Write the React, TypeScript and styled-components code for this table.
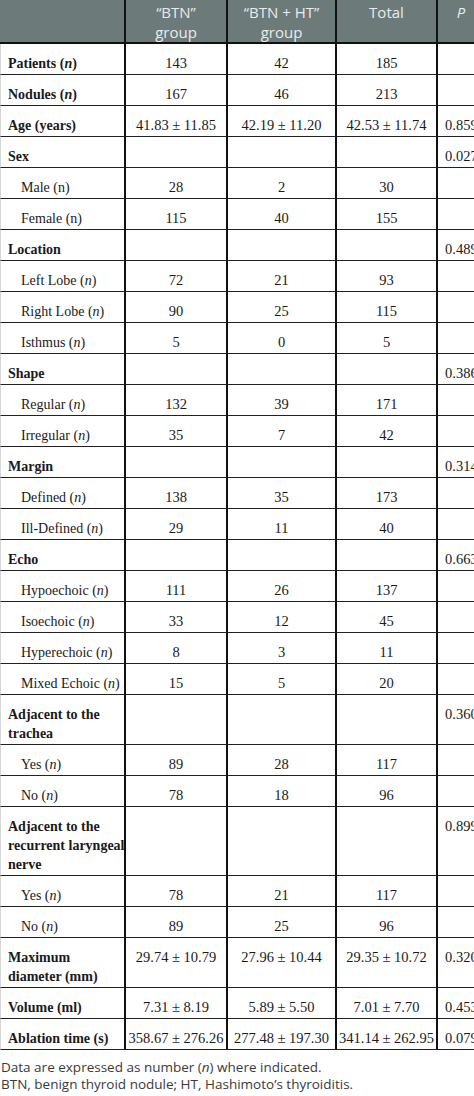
import React from 'react'
import styled, { createGlobalStyle } from 'styled-components'

const GlobalStyle = createGlobalStyle`
  html, body {
    margin: 0;
    padding: 0;
    background: #ffffff;
    overflow-x: hidden;
  }
`

const Page = styled.div`
  width: 474px;
  overflow: hidden;
  background: #fff;
`

const Table = styled.table`
  border-collapse: separate;
  border-spacing: 0;
  table-layout: fixed;
  width: 486px;
`

const HeadCell = styled.th<{ $w: number; $italic?: boolean }>`
  box-sizing: border-box;
  width: ${p => p.$w}px;
  background: #6d7a7a;
  color: #e9ecec;
  font-family: "Open Sans", "Noto Sans", sans-serif;
  font-weight: 400;
  font-size: 15px;
  font-style: ${p => (p.$italic ? 'italic' : 'normal')};
  line-height: 20px;
  text-align: center;
  vertical-align: top;
  padding: 2px 4px 0;
  height: 43px;
  border-right: 2px solid #111;
  border-bottom: 2px solid #111;
`

const Cell = styled.td<{ $first?: boolean }>`
  box-sizing: border-box;
  font-family: "Liberation Serif", "Times New Roman", serif;
  font-size: 14.5px;
  line-height: 19px;
  color: #1a1a1a;
  vertical-align: top;
  text-align: center;
  padding: 10px 2px 1px;
  border-right: 2px solid #111;
  border-bottom: 1px solid #222;
  white-space: nowrap;
  ${p => p.$first && `border-left: 1px solid #d6d6d6;`}
`

const LabelCell = styled(Cell)<{ $sub?: boolean }>`
  text-align: left;
  font-size: 14px;
  padding-left: ${p => (p.$sub ? 20 : 7)}px;
  padding-right: 0;
  font-weight: ${p => (p.$sub ? 400 : 700)};
`

const PCell = styled(Cell)`
  text-align: left;
  padding-left: 7px;
`

const N = styled.i``

const Notes = styled.div`
  font-family: "Open Sans", "Noto Sans", sans-serif;
  font-size: 13.5px;
  line-height: 17px;
  color: #3a3a3a;
  padding: 9px 0 0 1px;
  white-space: nowrap;
`

type Row = {
  label: React.ReactNode
  sub?: boolean
  v?: [string, string, string]
  p?: string
}

const n = <N>n</N>

const rows: Row[] = [
  { label: <>Patients ({n})</>, v: ['143', '42', '185'] },
  { label: <>Nodules ({n})</>, v: ['167', '46', '213'] },
  { label: 'Age (years)', v: ['41.83 ± 11.85', '42.19 ± 11.20', '42.53 ± 11.74'], p: '0.859' },
  { label: 'Sex', p: '0.027' },
  { label: 'Male (n)', sub: true, v: ['28', '2', '30'] },
  { label: 'Female (n)', sub: true, v: ['115', '40', '155'] },
  { label: 'Location', p: '0.489' },
  { label: <>Left Lobe ({n})</>, sub: true, v: ['72', '21', '93'] },
  { label: <>Right Lobe ({n})</>, sub: true, v: ['90', '25', '115'] },
  { label: <>Isthmus ({n})</>, sub: true, v: ['5', '0', '5'] },
  { label: 'Shape', p: '0.386' },
  { label: <>Regular ({n})</>, sub: true, v: ['132', '39', '171'] },
  { label: <>Irregular ({n})</>, sub: true, v: ['35', '7', '42'] },
  { label: 'Margin', p: '0.314' },
  { label: <>Defined ({n})</>, sub: true, v: ['138', '35', '173'] },
  { label: <>Ill-Defined ({n})</>, sub: true, v: ['29', '11', '40'] },
  { label: 'Echo', p: '0.663' },
  { label: <>Hypoechoic ({n})</>, sub: true, v: ['111', '26', '137'] },
  { label: <>Isoechoic ({n})</>, sub: true, v: ['33', '12', '45'] },
  { label: <>Hyperechoic ({n})</>, sub: true, v: ['8', '3', '11'] },
  { label: <>Mixed Echoic ({n})</>, sub: true, v: ['15', '5', '20'] },
  { label: <>Adjacent to the<br />trachea</>, p: '0.360' },
  { label: <>Yes ({n})</>, sub: true, v: ['89', '28', '117'] },
  { label: <>No ({n})</>, sub: true, v: ['78', '18', '96'] },
  { label: <>Adjacent to the<br />recurrent laryngeal<br />nerve</>, p: '0.899' },
  { label: <>Yes ({n})</>, sub: true, v: ['78', '21', '117'] },
  { label: <>No ({n})</>, sub: true, v: ['89', '25', '96'] },
  { label: <>Maximum<br />diameter (mm)</>, v: ['29.74 ± 10.79', '27.96 ± 10.44', '29.35 ± 10.72'], p: '0.320' },
  { label: 'Volume (ml)', v: ['7.31 ± 8.19', '5.89 ± 5.50', '7.01 ± 7.70'], p: '0.453' },
  { label: 'Ablation time (s)', v: ['358.67 ± 276.26', '277.48 ± 197.30', '341.14 ± 262.95'], p: '0.079' },
]

export default function App() {
  return (
    <Page>
      <GlobalStyle />
      <Table>
        <thead>
          <tr>
            <HeadCell $w={126} />
            <HeadCell $w={102}>“BTN”<br />group</HeadCell>
            <HeadCell $w={109}>“BTN + HT”<br />group</HeadCell>
            <HeadCell $w={101}>Total</HeadCell>
            <HeadCell $w={48} $italic>P</HeadCell>
          </tr>
        </thead>
        <tbody>
          {rows.map((r, i) => (
            <tr key={i}>
              <LabelCell $first $sub={r.sub}>{r.label}</LabelCell>
              <Cell>{r.v?.[0]}</Cell>
              <Cell>{r.v?.[1]}</Cell>
              <Cell>{r.v?.[2]}</Cell>
              <PCell>{r.p}</PCell>
            </tr>
          ))}
        </tbody>
      </Table>
      <Notes>
        Data are expressed as number (<i>n</i>) where indicated.
        <br />
        BTN, benign thyroid nodule; HT, Hashimoto’s thyroiditis.
      </Notes>
    </Page>
  )
}
